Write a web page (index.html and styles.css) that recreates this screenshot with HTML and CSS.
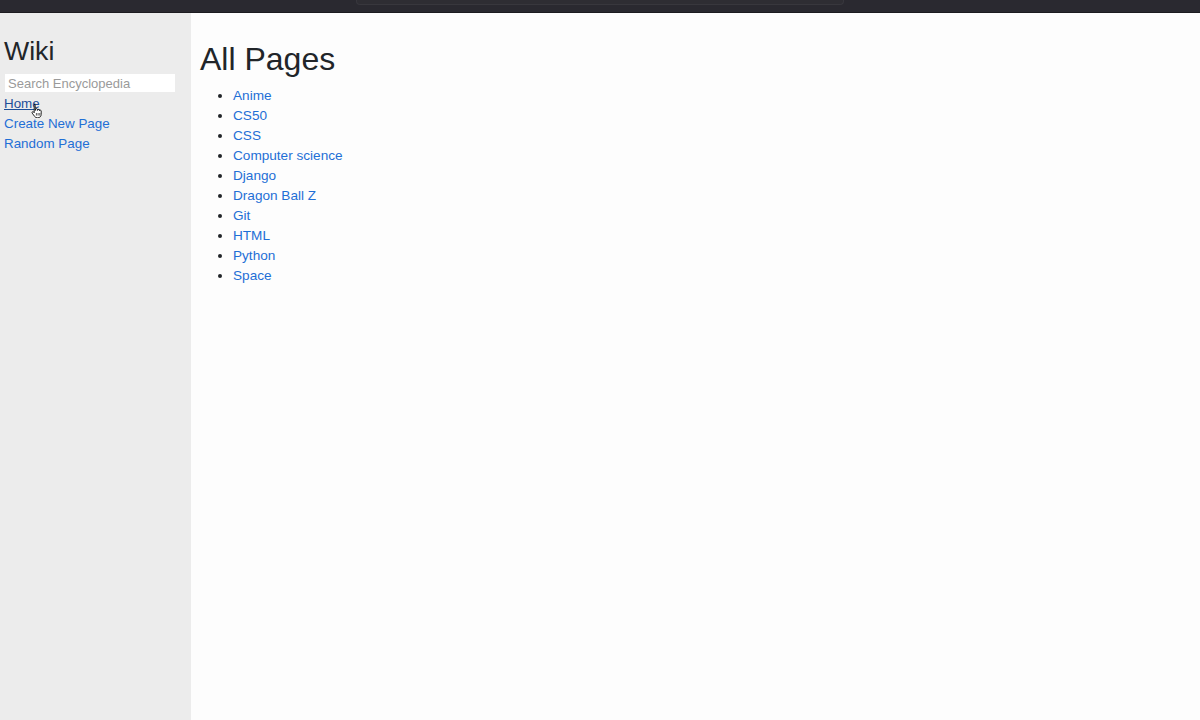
FILE: index.html
```html
<!DOCTYPE html>
<html lang="en">
<head>
    <meta charset="UTF-8">
    <meta name="viewport" content="width=device-width, initial-scale=1.0">
    <title>Encyclopedia</title>
    <link rel="stylesheet" href="styles.css">
</head>
<body>
    <div class="topbar">
        <div class="topbar-field"></div>
    </div>
    <div class="layout">
        <div class="sidebar">
            <h2>Wiki</h2>
            <form>
                <input class="search" type="text" name="q" placeholder="Search Encyclopedia">
            </form>
            <div class="nav">
                <div><a href="#" class="hover">Home</a></div>
                <div><a href="#">Create New Page</a></div>
                <div><a href="#">Random Page</a></div>
                <svg class="cursor" width="12" height="15" viewBox="0 0 12 15">
                    <path d="M3.2 1.2c.6 0 1 .4 1 1v5.2l.3-.1V6.4c0-.5.4-.9.9-.9s.9.4.9.9v1l.3-.1c0-.5.4-.9.9-.9s.9.4.9.9v.5c.1-.4.5-.7.9-.7.5 0 .9.4.9.9v3.4c0 1.9-1.4 3.4-3.3 3.4H6.1c-1 0-1.8-.5-2.4-1.3L1.2 10.1c-.3-.4-.2-1 .2-1.3.4-.3 1-.2 1.3.2l.5.7V2.2c0-.6.4-1 1-1z" fill="#fff" stroke="#111" stroke-width=".9"/>
                    <path d="M5.4 10v2.6M7.1 10v2.6M8.8 10v2.6" stroke="#111" stroke-width=".7"/>
                </svg>
            </div>
        </div>
        <div class="main">
            <h1>All Pages</h1>
            <ul>
                <li><a href="#">Anime</a></li>
                <li><a href="#">CS50</a></li>
                <li><a href="#">CSS</a></li>
                <li><a href="#">Computer science</a></li>
                <li><a href="#">Django</a></li>
                <li><a href="#">Dragon Ball Z</a></li>
                <li><a href="#">Git</a></li>
                <li><a href="#">HTML</a></li>
                <li><a href="#">Python</a></li>
                <li><a href="#">Space</a></li>
            </ul>
        </div>
    </div>
</body>
</html>
```

FILE: styles.css
```css
html, body {
    margin: 0;
    height: 100%;
}
body {
    font-family: "Liberation Sans", Arial, sans-serif;
    font-size: 13.4px;
    line-height: 20px;
    color: #212529;
    background-color: #fdfdfd;
    display: flex;
    flex-direction: column;
    overflow: hidden;
}
.topbar {
    height: 13px;
    background-color: #2a2930;
    border-bottom: 1px solid #1c1b20;
    box-sizing: border-box;
    display: flex;
    justify-content: center;
}
.topbar-field {
    width: 486px;
    height: 4px;
    border: 1px solid #38373d;
    border-top: none;
    border-radius: 0 0 4px 4px;
    background-color: #2e2d33;
}
.layout {
    flex: 1;
    display: flex;
}
.sidebar {
    width: 191px;
    background-color: #ececec;
    padding: 22px 4px 0 4px;
    box-sizing: border-box;
}
.sidebar h2 {
    margin: 0 0 7px 0;
    font-size: 26.7px;
    line-height: 32px;
    font-weight: 400;
}
.search {
    display: block;
    width: 170px;
    height: 18px;
    margin: 0 0 2px 1px;
    padding: 0 3px;
    box-sizing: border-box;
    border: none;
    background-color: #fff;
    font-family: inherit;
    font-size: 13px;
    color: #212529;
    outline: none;
}
.search::placeholder {
    color: #9a9a9a;
}
.nav {
    position: relative;
}
a {
    color: #1f6fd6;
    text-decoration: none;
}
a.hover {
    color: #1d4f98;
    text-decoration: underline;
}
.cursor {
    position: absolute;
    left: 27px;
    top: 9px;
}
.main {
    flex: 1;
    padding: 26px 8px 0 9px;
}
.main h1 {
    margin: 0 0 7px 0;
    font-size: 32px;
    line-height: 40px;
    font-weight: 400;
}
.main ul {
    margin: 0;
    padding-left: 33px;
    font-size: 13.6px;
}
```
